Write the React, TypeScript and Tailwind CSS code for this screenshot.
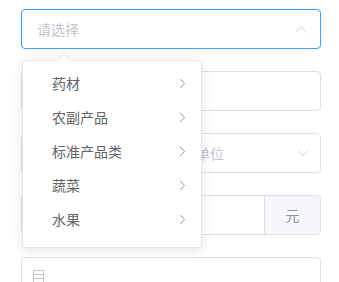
import { ChevronDown, ChevronRight, ChevronUp } from "lucide-react";

const options = ["药材", "农副产品", "标准产品类", "蔬菜", "水果"];

function CascaderMenu() {
  return (
    <div className="absolute left-[22px] top-[60px] z-10 w-[180px] h-[188px] rounded bg-white border border-[#e4e7ed] shadow-[0_2px_12px_0_rgba(0,0,0,0.1)] py-[5px]">
      {/* popper arrow */}
      <div className="absolute -top-[6px] left-[36px] w-[10px] h-[10px] rotate-45 bg-white border-l border-t border-[#e4e7ed]" />
      {options.map((o) => (
        <div
          key={o}
          className="relative flex items-center h-[34px] pl-[29px] pr-[10px] text-[14px] text-[#606266]"
        >
          <span className="flex-1">{o}</span>
          <ChevronRight size={17} strokeWidth={1.2} className="text-[#7d8087]" />
        </div>
      ))}
    </div>
  );
}

export default function App() {
  return (
    <div
      className="relative w-[339px] h-[282px] overflow-hidden bg-white pl-[21px] pt-[9px]"
      style={{ fontFamily: '"Noto Sans CJK SC", "Noto Sans", sans-serif' }}
    >
      <div className="flex flex-col gap-[22px] w-[300px]">
        {/* active cascader */}
        <div className="flex items-center h-[40px] rounded border border-[#409eff] pl-[15px] pr-[10px]">
          <span className="flex-1 text-[14px] text-[#c0c4cc]">请选择</span>
          <ChevronUp size={18} strokeWidth={1.1} className="text-[#c0c4cc]" />
        </div>

        <div className="h-[40px] rounded border border-[#dcdfe6]" />

        <div className="flex items-center h-[40px] rounded border border-[#dcdfe6] pr-[8px]">
          <span className="flex-1 text-right pr-[70px] text-[14px] text-[#c0c4cc]">选择单位</span>
          <ChevronDown size={18} strokeWidth={1.1} className="text-[#c0c4cc]" />
        </div>

        <div className="flex h-[40px] rounded border border-[#dcdfe6] overflow-hidden">
          <div className="flex-1" />
          <div className="w-[56px] flex items-center justify-center bg-[#f5f7fa] border-l border-[#dcdfe6] text-[14px] text-[#909399]">
            元
          </div>
        </div>

        <div className="h-[60px] rounded border border-[#dcdfe6] pl-[11px] pt-[12px]">
          <svg width="11" height="13" viewBox="0 0 11 13" className="text-[#c0c4cc]">
            <rect x="0.5" y="0.5" width="10" height="12" fill="none" stroke="currentColor" />
            <line x1="1" y1="4.5" x2="10" y2="4.5" stroke="currentColor" />
            <line x1="1" y1="8.5" x2="10" y2="8.5" stroke="currentColor" />
          </svg>
        </div>
      </div>

      <CascaderMenu />
    </div>
  );
}
